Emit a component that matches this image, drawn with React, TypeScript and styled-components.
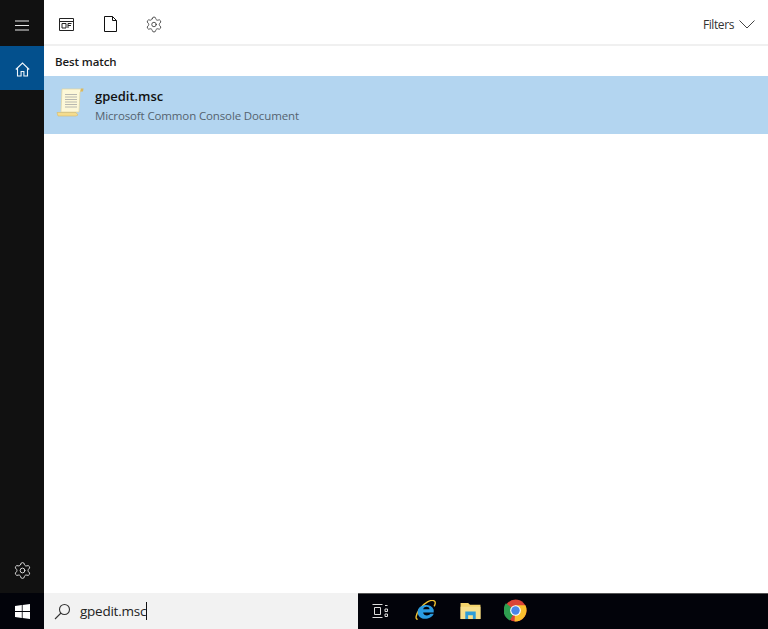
import React from "react";
import styled, { createGlobalStyle } from "styled-components";
import { Settings } from "lucide-react";

const Global = createGlobalStyle`
  html, body { margin: 0; padding: 0; background: #fff; }
  * { box-sizing: border-box; }
`;

const Screen = styled.div`
  width: 768px;
  height: 629px;
  display: grid;
  grid-template-columns: 44px 314px 1fr;
  grid-template-rows: 593px 36px;
  overflow: hidden;
  font-family: "Open Sans", "Noto Sans", sans-serif;
`;

const Rail = styled.nav`
  background: #111111;
  display: flex;
  flex-direction: column;
`;

const RailButton = styled.div<{ $active?: boolean; $top?: number }>`
  width: 44px;
  height: ${(p) => (p.$active ? "44px" : "46px")};
  padding-top: ${(p) => p.$top ?? 0}px;
  display: flex;
  align-items: center;
  justify-content: center;
  background: ${(p) => (p.$active ? "#03508d" : "transparent")};
`;

const RailSpacer = styled.div`
  flex: 1;
`;

const Panel = styled.main`
  grid-column: 2 / 4;
  background: #fff;
  display: flex;
  flex-direction: column;
`;

const Toolbar = styled.header`
  height: 46px;
  flex: none;
  border-bottom: 2px solid #f0f0f0;
  display: flex;
  align-items: center;
  padding: 4px 13px 0 13px;
`;

const ToolIcon = styled.div`
  width: 18px;
  height: 18px;
  margin-right: 26px;
  display: flex;
  align-items: center;
  justify-content: center;
`;

const Filters = styled.div`
  margin-left: auto;
  display: flex;
  align-items: center;
  gap: 5px;
  font-size: 12px;
  letter-spacing: -0.4px;
  color: #333;
`;

const SectionLabel = styled.div`
  height: 30px;
  flex: none;
  padding: 0 0 0 11px;
  display: flex;
  align-items: center;
  font-size: 11.5px;
  font-weight: 600;
  letter-spacing: -0.1px;
  color: #1a1a1a;
`;

const ResultRow = styled.div`
  height: 58px;
  flex: none;
  background: #b3d5f0;
  display: flex;
  align-items: center;
  padding-left: 12px;
  gap: 9px;
`;

const ResultGlyph = styled.svg`
  align-self: flex-start;
  margin-top: 11px;
`;

const ResultText = styled.div`
  display: flex;
  flex-direction: column;
  gap: 3px;
`;

const ResultTitle = styled.div`
  font-size: 13px;
  font-weight: 600;
  line-height: 17px;
  letter-spacing: -0.02px;
  color: #111;
`;

const ResultSub = styled.div`
  font-size: 11.5px;
  line-height: 15px;
  letter-spacing: -0.13px;
  color: #55636f;
`;

const StartButton = styled.div`
  background: #02030a;
  display: flex;
  align-items: center;
  justify-content: center;
`;

const SearchBox = styled.div`
  background: #f2f2f2;
  display: flex;
  align-items: center;
  padding-left: 10px;
  gap: 9px;
`;

const SearchText = styled.div`
  font-size: 13.5px;
  letter-spacing: -0.25px;
  color: #222;
  border-right: 1px solid #111;
  line-height: 18px;
`;

const Taskbar = styled.div`
  background: #02030a;
  border-top: 1px solid #555;
  display: flex;
  align-items: center;
  padding: 0 0 2px 10px;
`;

const TaskIcon = styled.div`
  width: 24px;
  height: 24px;
  margin-right: 21px;
  display: flex;
  align-items: center;
  justify-content: center;
`;

export default function App() {
  return (
    <Screen>
      <Global />
      <Rail>
        <RailButton $top={4}>
          <svg width="16" height="11" viewBox="0 0 16 11" stroke="#e8e8e8" strokeWidth="1.2">
            <path d="M1 1h14M1 5.500h14M1 10h14" />
          </svg>
        </RailButton>
        <RailButton $active $top={2}>
          <svg width="15" height="15" viewBox="0 0 15 15" fill="none" stroke="#f0f6fb" strokeWidth="1.1">
            <path d="M.8 7.5 7.5 1l6.7 6.5M2.5 6v8h3.6V9.5h2.8V14h3.6V6" />
          </svg>
        </RailButton>
        <RailSpacer />
        <RailButton>
          <Settings size={19} color="#e0e0e0" strokeWidth={1.2} />
        </RailButton>
      </Rail>
      <Panel>
        <Toolbar>
          <ToolIcon>
            <svg width="15" height="13" viewBox="0 0 15 13" fill="none" stroke="#222" strokeWidth="1">
              <path d="M.5.5h14v12H.5zM.5 3.5h14M3 5.500h4v4.500H3zM9 5.500h3.500M9 7.500h3M9 5.500V10" />
            </svg>
          </ToolIcon>
          <ToolIcon>
            <svg width="13" height="16" viewBox="0 0 13 16" fill="none" stroke="#111" strokeWidth="1">
              <path d="M.5.5h8l4 4v11H.5zM8.5.5v4h4" />
            </svg>
          </ToolIcon>
          <ToolIcon>
            <Settings size={19} color="#333" strokeWidth={1.1} />
          </ToolIcon>
          <Filters>
            Filters
            <svg width="16" height="9" viewBox="0 0 16 9" fill="none" stroke="#444" strokeWidth="1">
              <path d="M.5.5 8 8l7.5-7.5" />
            </svg>
          </Filters>
        </Toolbar>
        <SectionLabel>Best match</SectionLabel>
        <ResultRow>
          <ResultGlyph width="30" height="30" viewBox="0 0 30 30">
            <path d="M6 2h19l2 1-3 2-1 20H5z" fill="#fdf8d8" stroke="#e2d49c" strokeWidth=".7" />
            <path d="M25 1.5h2.5l-.5 3h-3z" fill="#d9b860" />
            <path d="M1 25.5h19l2 2.5-2 1H2z" fill="#f4dc8e" stroke="#d8ba6a" strokeWidth=".6" />
            <path d="M9 7.500h12M9 10h12M9 12.500h12M9 15h12M9 17.500h12M9 20h12" stroke="#b8b8b0" strokeWidth="1" />
          </ResultGlyph>
          <ResultText>
            <ResultTitle>gpedit.msc</ResultTitle>
            <ResultSub>Microsoft Common Console Document</ResultSub>
          </ResultText>
        </ResultRow>
      </Panel>
      <StartButton>
        <svg width="15" height="15" viewBox="0 0 15 15" fill="#fff">
          <path d="M0 2.100 6.800 1v6H0zM7.600.900 15 0v7H7.600zM0 7.900h6.800v6L0 12.900zM7.600 7.900H15V15l-7.400-1z" />
        </svg>
      </StartButton>
      <SearchBox>
        <svg width="17" height="17" viewBox="0 0 17 17" fill="none" stroke="#333" strokeWidth="1.1">
          <circle cx="10.500" cy="6.500" r="5" />
          <path d="M7 10 1 16" />
        </svg>
        <SearchText>gpedit.msc</SearchText>
      </SearchBox>
      <Taskbar>
        <TaskIcon>
          <svg width="16" height="14" viewBox="0 0 16 14" fill="none" stroke="#ddd" strokeWidth="1">
            <path d="M.5.5h10M.5 13.500h10M2.500 3.500h6v7h-6z" />
            <path d="M13 1.500h2.500M13 5h2.500v2.500H13zM13 10h2.500v2.500H13z" />
          </svg>
        </TaskIcon>
        <TaskIcon>
          <svg width="22" height="22" viewBox="0 0 24 24" fill="none">
            <path d="M4 21c-3 0-2-5 2-11C11 3 19-1 22 1c2 1 1 4 0 6" stroke="#f2c230" strokeWidth="1.5" />
            <path d="M21.500 13.500H10c.2 3.500 5.500 4.500 8 1.500h3.500c-3 7.500-18 8-17.500-2.500C4.500 5 18 2.500 21.500 10.500z M10 10h7c-.5-3.500-6-3.500-7 0z" fill="#2a9be0" fillRule="evenodd" />
          </svg>
        </TaskIcon>
        <TaskIcon>
          <svg width="21" height="18" viewBox="0 0 21 19">
            <path d="M0 1h8l2 2h11v15H0z" fill="#f5d46a" />
            <path d="M0 5h21v13H0z" fill="#f8e08c" />
            <path d="M5 10h11v8h-3v-4H8v4H5z" fill="#2f9ed8" />
          </svg>
        </TaskIcon>
        <TaskIcon>
          <svg width="23" height="23" viewBox="0 0 24 24">
            <circle cx="12" cy="12" r="11.500" fill="#db4437" />
            <path d="M12 12 6 22.400A12 12 0 0 1 2 4.500z" fill="#2e9e4f" />
            <path d="M12 6.500h10.400A12 12 0 0 1 11 23.500z" fill="#fbc02d" />
            <circle cx="12" cy="12" r="5.600" fill="#fff" />
            <circle cx="12" cy="12" r="4.400" fill="#4a86e8" />
          </svg>
        </TaskIcon>
      </Taskbar>
    </Screen>
  );
}
